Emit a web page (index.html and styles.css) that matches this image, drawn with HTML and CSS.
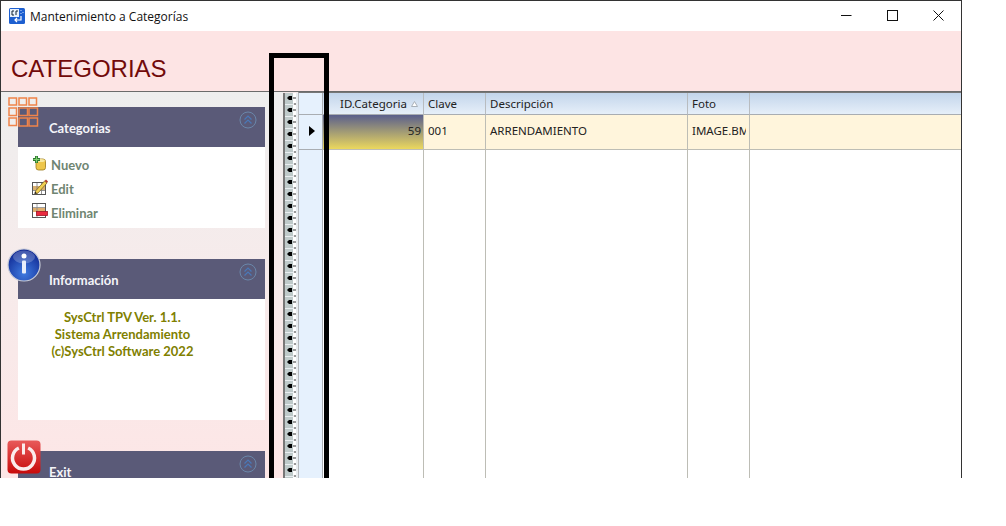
FILE: index.html
```html
<!DOCTYPE html>
<html lang="es">
<head>
<meta charset="utf-8">
<title>Mantenimiento a Categorías</title>
<link rel="stylesheet" href="styles.css">
</head>
<body>
<div class="window">
  <div class="titlebar">
    <svg class="appicon" width="16" height="16" viewBox="0 0 16 16">
      <rect width="16" height="16" rx="1.5" fill="#1d5fd0"/>
      <rect x="1" y="1" width="9" height="8" fill="#e8f0fa"/>
      <path d="M3 3h2M3 3v4h2M7 3v4M7 3h2" stroke="#123" stroke-width="1" fill="none"/>
      <path d="M12 2v1M14 4v1M12 5v1" stroke="#cfe0fa" stroke-width="1"/>
      <path d="M12 8v4H6M8 10l-2 2 2 2" stroke="#fff" stroke-width="1.2" fill="none"/>
    </svg>
    <span class="title">Mantenimiento a Categorías</span>
    <div class="controls">
      <span class="ctl"><svg width="11" height="11" viewBox="0 0 11 11"><path d="M0 5.500h10.500" stroke="#111"/></svg></span>
      <span class="ctl"><svg width="11" height="11" viewBox="0 0 11 11"><rect x=".5" y=".5" width="10" height="10" fill="none" stroke="#111"/></svg></span>
      <span class="ctl"><svg width="11" height="11" viewBox="0 0 11 11"><path d="M.5.5l10 10M10.500.5l-10 10" stroke="#111"/></svg></span>
    </div>
  </div>
  <div class="banner"><h1>CATEGORIAS</h1></div>
  <div class="main">
    <aside class="sidebar">
      <section class="panel">
        <svg class="badge badge-grid" width="32" height="32" viewBox="0 0 32 32">
          <g fill="none" stroke="#f0844a" stroke-width="1.500">
            <rect x="1" y="1" width="7.500" height="7"/><rect x="11" y="1" width="7.500" height="7"/><rect x="21" y="1" width="7.500" height="7"/>
            <rect x="1" y="11" width="7.500" height="7.500"/><rect x="11" y="11" width="8.500" height="7.500"/><rect x="21" y="11" width="8.500" height="7.500"/>
            <rect x="1" y="21" width="7.500" height="7.500"/><rect x="11" y="21" width="8.500" height="8"/><rect x="21" y="21" width="8.500" height="8"/>
          </g>
        </svg>
        <div class="panel-head">
          <span>Categorias</span>
          <svg class="chev" width="18" height="18" viewBox="0 0 18 18"><circle cx="9" cy="9" r="8" fill="none" stroke="#6a87aa"/><path d="M5.500 8.500L9 5l3.500 3.500M5.500 12.500L9 9l3.500 3.500" fill="none" stroke="#4a78b8" stroke-width="1.200"/></svg>
        </div>
        <ul class="panel-body actions">
          <li>
            <svg width="16" height="16" viewBox="0 0 16 16"><rect x="4" y="4" width="9.500" height="11" rx="2.500" fill="#eec64a" stroke="#9a7a1a" stroke-width=".8"/><ellipse cx="8.800" cy="5.500" rx="4" ry="1.500" fill="#f8e8a0"/><path d="M4.500 1v7M1 4.500h7" stroke="#2f7a30" stroke-width="3"/><path d="M4.500 1.500v6M1.500 4.500h6" stroke="#7fd070" stroke-width="1.200"/></svg>
            <span>Nuevo</span>
          </li>
          <li>
            <svg width="16" height="16" viewBox="0 0 16 16"><rect x=".5" y="3.500" width="13" height="12" fill="#fff" stroke="#555"/><rect x="1" y="7" width="12" height="4" fill="#d9b070"/><path d="M5 4v11M9.500 4v11M1 11.500h12" stroke="#777" stroke-width=".8"/><path d="M3.500 12L12.500 2l2.500 2L6 14l-3 1z" fill="#f0cf50" stroke="#7a5a18" stroke-width=".7"/><path d="M12.500 2l1.500-1.500 2 2L15 4z" fill="#b03a2a"/><path d="M3 12.500l-.5 2.500 2.500-.7z" fill="#222"/></svg>
            <span>Edit</span>
          </li>
          <li>
            <svg width="16" height="16" viewBox="0 0 16 16"><rect x=".5" y=".5" width="13" height="14" fill="#fff" stroke="#555"/><rect x="1" y="5" width="12" height="4" fill="#e0b070"/><path d="M5 1v13M1 4.500h12" stroke="#888" stroke-width=".8"/><rect x="4.500" y="8.500" width="11" height="4" fill="#ea2a40" stroke="#a01525" stroke-width=".8"/></svg>
            <span>Eliminar</span>
          </li>
        </ul>
      </section>
      <section class="panel">
        <svg class="badge badge-round" width="34" height="34" viewBox="0 0 34 34">
          <defs><radialGradient id="blue" cx=".5" cy=".75" r=".8"><stop offset="0" stop-color="#3f7be0"/><stop offset="1" stop-color="#0b1f8a"/></radialGradient></defs>
          <circle cx="17" cy="17" r="16" fill="url(#blue)" stroke="#c8ccd8" stroke-width="1.200"/>
          <ellipse cx="17" cy="9" rx="11" ry="6.500" fill="#fff" opacity=".22"/>
          <circle cx="17" cy="8" r="2.500" fill="#fff"/>
          <rect x="15" y="12.500" width="4" height="13" rx="1" fill="#e8eefa"/>
        </svg>
        <div class="panel-head">
          <span>Información</span>
          <svg class="chev" width="18" height="18" viewBox="0 0 18 18"><circle cx="9" cy="9" r="8" fill="none" stroke="#6a87aa"/><path d="M5.500 8.500L9 5l3.500 3.500M5.500 12.500L9 9l3.500 3.500" fill="none" stroke="#4a78b8" stroke-width="1.200"/></svg>
        </div>
        <div class="panel-body about">
          <p>SysCtrl TPV Ver. 1.1.</p>
          <p>Sistema Arrendamiento</p>
          <p>(c)SysCtrl Software 2022</p>
        </div>
      </section>
      <section class="panel">
        <svg class="badge badge-power" width="34" height="34" viewBox="0 0 34 34">
          <defs><linearGradient id="red" x1="0" y1="0" x2="0" y2="1"><stop offset="0" stop-color="#e85a5a"/><stop offset="1" stop-color="#c80a0a"/></linearGradient></defs>
          <rect x=".5" y=".5" width="33" height="33" rx="4" fill="url(#red)"/>
          <path d="M11.850 8.030A11 11 0 1 0 21.150 8.030" fill="none" stroke="#fbecec" stroke-width="3.500"/>
          <path d="M16.500 3.500v11" stroke="#fbecec" stroke-width="3"/>
        </svg>
        <div class="panel-head">
          <span>Exit</span>
          <svg class="chev" width="18" height="18" viewBox="0 0 18 18"><circle cx="9" cy="9" r="8" fill="none" stroke="#6a87aa"/><path d="M5.500 8.500L9 5l3.500 3.500M5.500 12.500L9 9l3.500 3.500" fill="none" stroke="#4a78b8" stroke-width="1.200"/></svg>
        </div>
      </section>
    </aside>
    <div class="splitter">
      <svg width="15" height="386">
        <defs>
          <pattern id="grip" width="15" height="12" patternUnits="userSpaceOnUse">
            <rect width="15" height="12" fill="#e9edf0"/>
            <rect x="0" width="2" height="12" fill="#777"/>
            <rect x="2" width="8" height="11" fill="#bfcaca"/>
            <path d="M4 5L6 3v4z" fill="#000"/>
            <rect x="6" y="3" width="3" height="4" fill="#000"/>
            <rect x="10" width="3" height="4" fill="#fff"/>
            <rect x="10" y="4" width="3" height="2" fill="#999"/>
            <rect x="10" y="6" width="3" height="4" fill="#fff"/>
            <rect x="11" y="10" width="2" height="2" fill="#999"/>
          </pattern>
        </defs>
        <rect width="15" height="386" fill="url(#grip)"/>
      </svg>
    </div>
    <div class="grid">
      <div class="hcell ind"></div>
      <div class="hcell id">ID.Categoria<svg class="sort" width="7" height="6" viewBox="0 0 7 6"><path d="M3.500.5L6.500 5.500H.5z" fill="#fff" stroke="#a8b0b8"/></svg></div>
      <div class="hcell">Clave</div>
      <div class="hcell">Descripción</div>
      <div class="hcell">Foto</div>
      <div class="hcell last"></div>

      <div class="cell ind"><i class="arrow"></i></div>
      <div class="cell num">59</div>
      <div class="cell">001</div>
      <div class="cell">ARRENDAMIENTO</div>
      <div class="cell"><span class="clip">IMAGE.BMP</span></div>
      <div class="cell last"></div>

      <div class="fill ind"></div>
      <div class="fill"></div>
      <div class="fill"></div>
      <div class="fill"></div>
      <div class="fill"></div>
      <div class="fill last"></div>
    </div>
  </div>
  <div class="frame"></div>
</div>
</body>
</html>
```

FILE: styles.css
```css
* { box-sizing: border-box; }
html, body { margin: 0; padding: 0; background: #fff; }
body { height: 526px; overflow: hidden; font-family: "Noto Sans", sans-serif; }

.window {
  position: relative;
  width: 962px;
  height: 478px;
  display: flex;
  flex-direction: column;
  overflow: hidden;
  border: 1px solid #333;
  border-bottom: 0;
}

.titlebar {
  height: 30px;
  flex: none;
  display: flex;
  align-items: center;
  padding-left: 8px;
  background: #fff;
}
.appicon { margin-right: 5px; }
.title { font-family: "Open Sans", sans-serif; font-size: 12px; color: #111; }
.controls { margin-left: auto; display: flex; align-self: flex-start; }
.ctl { width: 46px; height: 29px; padding-left: 1px; display: flex; align-items: center; justify-content: center; }

.banner {
  height: 61px;
  flex: none;
  display: flex;
  align-items: flex-end;
  padding: 0 0 9px 10px;
  background: #fde4e4;
  border-bottom: 1px solid #6b6b6b;
}
.banner h1 {
  margin: 0;
  font-family: "Liberation Sans", Arial, sans-serif;
  font-size: 24px;
  line-height: 26px;
  font-weight: 400;
  color: #720a0a;
}

.main { flex: 1; min-height: 0; display: flex; }

.sidebar {
  width: 282px;
  flex: none;
  padding: 15px 18px 0 17px;
  display: flex;
  flex-direction: column;
  gap: 31px;
  background: linear-gradient(#eeeeee, #f6ebeb 45%, #fde6e6);
  overflow: hidden;
}
.panel { position: relative; flex: none; }
.panel-head {
  position: relative;
  height: 40px;
  background: #5a5a78;
  color: #f4f4f8;
  font-family: Lato, sans-serif;
  font-size: 13px;
  font-weight: 700;
  padding: 12px 0 0 31px;
  line-height: 18px;
}
.chev { position: absolute; right: 8px; top: 4px; }
.panel-body { background: #fff; margin: 0; }

.badge { position: absolute; z-index: 1; }
.badge-grid { left: -10px; top: -10px; }
.badge-round { left: -11px; top: -11px; }
.badge-power { left: -11px; top: -11px; }

.actions {
  list-style: none;
  height: 81px;
  padding: 6px 0 0 14px;
}
.actions li {
  height: 24px;
  display: flex;
  align-items: center;
  gap: 3px;
  font-family: Lato, sans-serif;
  font-size: 13px;
  font-weight: 700;
  color: #6f8572;
}
.actions svg { flex: none; margin-top: -4px; }

.about {
  height: 121px;
  padding: 10px 38px 0 0;
  text-align: center;
  font-family: Lato, sans-serif;
  font-size: 13px;
  font-weight: 700;
  line-height: 17px;
  color: #808000;
}
.about p { margin: 0; }

.splitter { width: 15px; flex: none; padding-top: 1px; background: #f4e8e8; line-height: 0; }

.grid {
  flex: 1;
  min-width: 0;
  display: grid;
  grid-template-columns: 24px 101px 62px 202px 62px 1fr;
  grid-template-rows: 22px 35px 1fr;
  background: #fff;
  border-top: 1px solid #777;
  border-left: 1px solid #b4b8bc;
  font-family: "Noto Sans", sans-serif;
  font-size: 11.500px;
  color: #222;
}
.hcell {
  position: relative;
  display: flex;
  align-items: center;
  padding-left: 4px;
  background: linear-gradient(#c3d5eb, #e6eff9);
  border-right: 1px solid #b8bcc0;
  border-bottom: 1px solid #a9adb2;
  white-space: nowrap;
}
.hcell.id { justify-content: flex-start; padding-left: 17px; }
.hcell.ind { background: #e6f1fd; border-right-color: #a9adb2; }
.sort { position: absolute; right: 5px; top: 8px; }
.cell {
  display: flex;
  align-items: center;
  padding: 0 0 3px 4px;
  background: #fff5dc;
  border-right: 1px solid #bdbdb5;
  border-bottom: 1px solid #bdbdb5;
  white-space: nowrap;
  overflow: hidden;
}
.cell.num {
  justify-content: flex-end;
  padding: 0 2px 3px 0;
  background: linear-gradient(#5a5f8c, #ebd85e);
}
.cell.ind { background: #e6f1fd; border-color: #a9adb2; }
.clip { display: block; width: 54px; overflow: hidden; }
.arrow {
  width: 0;
  height: 0;
  margin-left: 6px;
  border-top: 5px solid transparent;
  border-bottom: 5px solid transparent;
  border-left: 6px solid #000;
}
.fill { border-right: 1px solid #bdbdb5; }
.fill.ind { background: #e6f1fd; border-right-color: #a9adb2; }
.last { border-right: 0; }

.frame {
  position: absolute;
  left: 268px;
  top: 52px;
  width: 60px;
  height: 440px;
  border: 5px solid #000;
  border-bottom: 0;
  pointer-events: none;
}
```
